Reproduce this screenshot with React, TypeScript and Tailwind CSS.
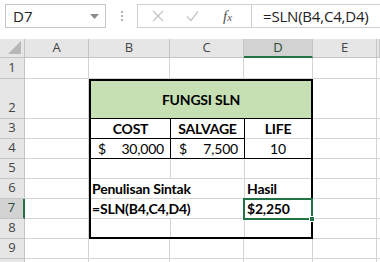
import React from 'react';

const cellFont = { fontFamily: 'Lato, "Open Sans", sans-serif' };
const uiFont = { fontFamily: '"Open Sans", "Noto Sans", sans-serif' };

const grid = 'border-r border-b border-[#d4d4d4]';
const hdr = 'bg-[#e6e6e6] border-r border-b border-[#c4c4c4] flex items-center justify-center text-[13px] text-[#444]';

const letters = ['A', 'B', 'C', 'D', 'E'];
const rows = [1, 2, 3, 4, 5, 6, 7, 8, 9, 10];

function TopBar() {
  return (
    <div className="h-[39px] flex items-start pt-[4px] bg-white" style={uiFont}>
      {/* name box */}
      <div className="ml-[5px] w-[101px] h-[24px] border border-[#c6c6c6] flex items-center justify-between pl-[7px] pr-[6px]">
        <span className="text-[15px] text-[#222]">D7</span>
        <svg width="9" height="5" viewBox="0 0 9 5">
          <path d="M0 0 L9 0 L4.5 5 Z" fill="#8a8a8a" />
        </svg>
      </div>
      <div className="w-[31px] h-[24px] flex flex-col items-center justify-center gap-[2px]">
        <span className="w-[2px] h-[2px] bg-[#b0b0b0]" />
        <span className="w-[2px] h-[2px] bg-[#b0b0b0]" />
        <span className="w-[2px] h-[2px] bg-[#b0b0b0]" />
      </div>
      {/* cancel / enter / fx */}
      <div className="w-[114px] h-[24px] border border-r-0 border-[#d0d0d0] flex items-center">
        <svg className="ml-[14px]" width="12" height="12" viewBox="0 0 12 12">
          <path d="M1 1 L11 11 M11 1 L1 11" stroke="#c4c4c4" strokeWidth="1.3" />
        </svg>
        <svg className="ml-[22px]" width="13" height="12" viewBox="0 0 13 12">
          <path d="M1 6.5 L5 10.5 L12 1.5" stroke="#c4c4c4" strokeWidth="1.3" fill="none" />
        </svg>
        <span className="ml-[24px] text-[15px] italic text-[#555]" style={{ fontFamily: '"Liberation Serif", serif' }}>
          f<span className="text-[11px]">x</span>
        </span>
      </div>
      <div className="flex-1 h-[24px] border border-r-0 border-[#d0d0d0] flex items-center pl-[11px]">
        <span className="text-[15px] text-[#222] tracking-[-0.2px]">=SLN(B4,C4,D4)</span>
      </div>
    </div>
  );
}

function SlnTable() {
  const b = 'border-[#d4d4d4]';
  return (
    <div className="col-start-3 col-span-3 row-start-3 row-span-7 border-2 border-black bg-white text-[14px] tracking-[-0.2px] text-black" style={cellFont}>
      <div className="grid h-full grid-cols-[80px_74px_1fr] grid-rows-[38px_20px_20px_20px_20px_20px_1fr]">
        <div className="col-span-3 bg-[#c6e0b4] border-b border-black flex items-center justify-center font-bold">
          FUNGSI SLN
        </div>

        <div className={`border-r border-black border-b ${b} flex items-center justify-center font-bold`}>COST</div>
        <div className={`border-r border-black border-b ${b} flex items-center justify-center font-bold`}>SALVAGE</div>
        <div className={`border-b ${b} flex items-center justify-center font-bold`}>LIFE</div>

        <div className="border-r border-b border-black flex items-center justify-between pl-[7px] pr-[6px]">
          <span>$</span><span>30,000</span>
        </div>
        <div className="border-r border-b border-black flex items-center justify-between pl-[8px] pr-[6px]">
          <span>$</span><span>7,500</span>
        </div>
        <div className="border-b border-black flex items-center justify-center">10</div>

        {/* row 5 */}
        <div className={`border-r border-b ${b}`} />
        <div className={`border-r border-b ${b}`} />
        <div className={`border-b ${b}`} />

        {/* row 6 */}
        <div className={`col-span-2 border-r border-b ${b} flex items-center pl-[1px] font-bold`}>Penulisan Sintak</div>
        <div className={`border-b ${b} flex items-center pl-[2px] font-bold`}>Hasil</div>

        {/* row 7 */}
        <div className={`col-span-2 border-r border-b ${b} flex items-center pl-[1px] font-bold`}>=SLN(B4,C4,D4)</div>
        <div className={`relative border-b ${b} flex items-center pl-[2px] font-bold`}>
          $2,250
          <div className="absolute -left-[2px] -top-[1px] -right-[2px] -bottom-[2px] border-2 border-[#217346]" />
          <div className="absolute -right-[4px] -bottom-[4px] w-[6px] h-[6px] bg-[#217346] border border-white" />
        </div>

        {/* row 8 */}
        <div className={`border-r ${b}`} />
        <div className={`border-r ${b}`} />
        <div />
      </div>
    </div>
  );
}

export default function App() {
  return (
    <div className="w-[380px] h-[262px] overflow-hidden bg-white select-none">
      <TopBar />
      <div className="grid grid-cols-[25px_64px_81px_74px_69px_64px_1fr] grid-rows-[19px_21px_40px_20px_20px_20px_20px_20px_20px_20px_20px]" style={uiFont}>
        <div className={`${hdr} items-end justify-end pr-[3px] pb-[3px]`}>
          <svg width="13" height="13" viewBox="0 0 13 13">
            <path d="M13 0 L13 13 L0 13 Z" fill="#b8b8b8" />
          </svg>
        </div>
        {letters.map((l) => (
          <div
            key={l}
            className={
              l === 'D'
                ? 'bg-[#d2d2d2] border-r border-[#c4c4c4] border-b-2 border-b-[#217346] flex items-center justify-center text-[13px] text-[#2b4a38]'
                : hdr
            }
          >
            {l}
          </div>
        ))}
        <div className={hdr} />

        <SlnTable />

        {rows.map((r) => (
          <React.Fragment key={r}>
            <div
              className={
                r === 7
                  ? 'bg-[#d2d2d2] border-b border-[#c4c4c4] border-r-2 border-r-[#217346] flex items-end justify-center pb-[1px] text-[13px] text-[#2b4a38]'
                  : `${hdr} items-end pb-[1px]`
              }
            >
              {r < 10 ? r : null}
            </div>
            <div className={grid} />
            {(r === 1 || r >= 9) && (
              <>
                <div className={grid} />
                <div className={grid} />
                <div className={grid} />
              </>
            )}
            <div className={grid} />
            <div className="border-b border-[#d4d4d4]" />
          </React.Fragment>
        ))}
      </div>
    </div>
  );
}
